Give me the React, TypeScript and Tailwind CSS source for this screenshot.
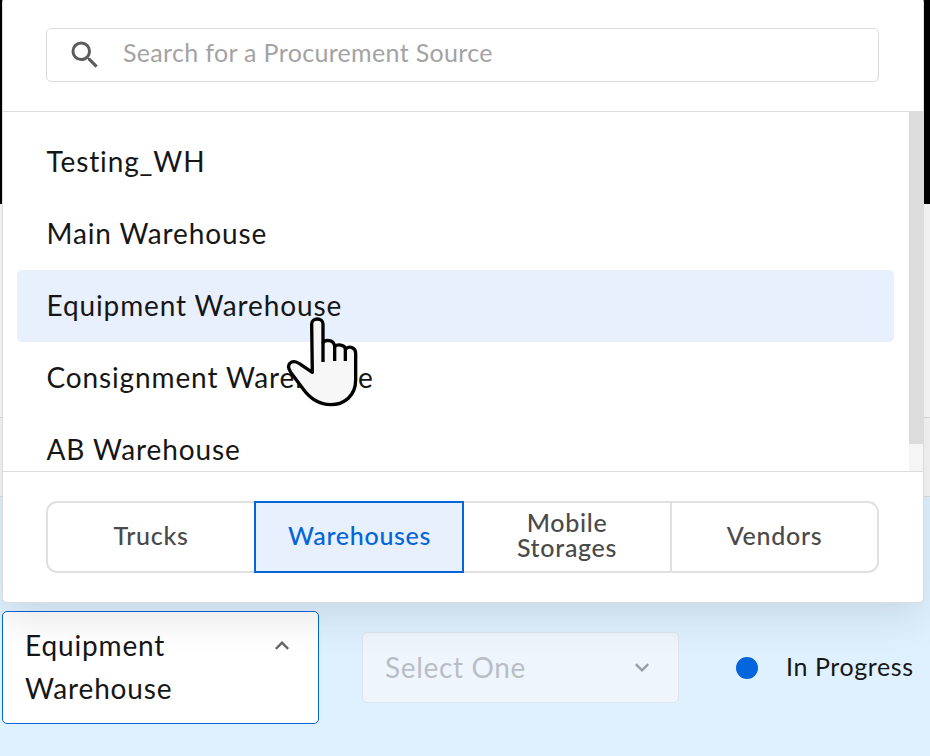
import React, { useState } from 'react'
import clsx from 'clsx'

const sources = [
  'Testing_WH',
  'Main Warehouse',
  'Equipment Warehouse',
  'Consignment Warehouse',
  'AB Warehouse',
]

const tabs = ['Trucks', 'Warehouses', 'Mobile Storages', 'Vendors']

function SearchIcon() {
  return (
    <svg viewBox="0 0 24 24" className="w-9 h-9 shrink-0" fill="#5c5c5c">
      <path d="M15.5 14h-.79l-.28-.27A6.47 6.47 0 0 0 16 9.500 6.500 6.500 0 1 0 9.500 16c1.610 0 3.090-.59 4.230-1.570l.27.28v.79l5 4.990L20.490 19l-4.990-5zm-6 0C7.010 14 5 11.990 5 9.500S7.010 5 9.500 5 14 7.010 14 9.500 11.990 14 9.500 14z" />
    </svg>
  )
}

function Chevron({ up = false, className }: { up?: boolean; className?: string }) {
  return (
    <svg viewBox="0 0 14 9" className={clsx('w-3.5 h-[9px] shrink-0', className)} fill="none" stroke="currentColor" strokeWidth="2.4">
      <path d={up ? 'M0.800 7.900L7 1.700l6.200 6.200' : 'M0.800 1.100L7 7.300l6.200-6.200'} />
    </svg>
  )
}

function HandPointer({ className }: { className?: string }) {
  return (
    <svg viewBox="0 0 360 390" className={className} fill="#f7f7f7" stroke="#000" strokeWidth="10" strokeLinejoin="round">
      <path d="M127 247L125 102C125 82 159 82 159 102V157C166 149 191 148 194 169C203 161 224 164 227 177C240 165 257 174 257 190V270C257 315 225 344 182 344C145 344 120 325 100 298L63 248C45 222 65 207 87 220Z" />
      <path d="M159 155V216M194 167V213M226 175V213" fill="none" />
    </svg>
  )
}

function SourceMenu() {
  const [selected, setSelected] = useState('Equipment Warehouse')
  const [tab, setTab] = useState('Warehouses')

  return (
    <div className="absolute left-[2px] -top-[3px] w-[922px] h-[606px] flex flex-col bg-white border border-[#dcdcdc] rounded-[5px] shadow-[0_16px_40px_rgba(0,0,0,0.1)] overflow-hidden">
      <div className="h-[112px] shrink-0 pl-[43px] pr-[44px] pt-[28px] mt-[2px] border-b border-[#dcdcdc]">
        <div className="h-[54px] flex items-center pl-5 border border-[#dcdcdc] rounded-[5px]">
          <SearchIcon />
          <span className="ml-5 pb-[5px] text-[25px] leading-none tracking-[0.33px] text-[#a3a3a3] whitespace-nowrap">
            Search for a Procurement Source
          </span>
        </div>
      </div>

      <div className="h-[359px] shrink-0 flex">
        <div className="flex-1 overflow-hidden py-[14px] pl-[14px] pr-[15px]">
          {sources.map((name) => (
            <div
              key={name}
              onClick={() => setSelected(name)}
              className={clsx(
                'h-[72px] flex items-center pl-[29.5px] pb-[2px] rounded-[5px] text-[28px] tracking-[0.87px] text-[#161616] whitespace-nowrap',
                name === selected && 'bg-[#e8effd]'
              )}
            >
              {name}
            </div>
          ))}
        </div>
        <div className="w-[14px] bg-[#f5f5f5]">
          <div className="h-[332px] bg-[#dcdcdc]" />
        </div>
      </div>

      <div className="flex-1 border-t border-[#dcdcdc] pl-[43px] pr-[44px] pt-[29px]">
        <div className="h-[72px] grid grid-cols-[210px_208px_208px_207px]">
          {tabs.map((name, i) => (
            <button
              key={name}
              onClick={() => setTab(name)}
              className={clsx(
                'px-8 pb-1 border-2 text-[25px] leading-[25px] tracking-[0.7px] font-medium',
                i > 0 && '-ml-[2px]',
                i === 0 && 'rounded-l-[11px]',
                i === tabs.length - 1 && 'rounded-r-[11px]',
                name === tab
                  ? 'relative bg-[#e8effd] border-[#0265dc] text-[#0265dc]'
                  : 'border-[#e0e0e0] text-[#4a4a4a]'
              )}
            >
              {name}
            </button>
          ))}
        </div>
      </div>
    </div>
  )
}

export default function App() {
  return (
    <div className="relative w-[930px] h-[756px] overflow-hidden flex flex-col font-[Lato,'Liberation_Sans',sans-serif]">
      <div className="h-[204px] bg-black" />
      <div className="h-[214px] bg-[#fbfbfb] border-b border-[#dcdcdc]" />
      <div className="h-[79px] bg-[#f7f7f7] border-b border-[#dcdcdc]" />

      <div className="flex-1 flex items-start bg-[#dff1ff] pt-[114px] pl-[2px]">
        <div className="w-[317px] h-[113px] flex justify-between bg-white border border-[#0265dc] rounded-[5px] pl-[22px] pr-[29.5px] pt-[12px]">
          <div className="w-[180px] text-[28px] leading-[43px] tracking-[0.85px] text-[#161616]">Equipment Warehouse</div>
          <Chevron up className="mt-[17px] text-[#666]" />
        </div>
        <div className="ml-[43px] mt-[21px] w-[317px] h-[71px] flex items-center justify-between bg-[#eff5fc] border border-[#dfe4ea] rounded-[5px] pl-[22px] pr-[29.5px]">
          <span className="pb-[2px] text-[28px] tracking-[0.65px] text-[#b9bec5]">Select One</span>
          <Chevron className="text-[#999fa5]" />
        </div>
        <div className="ml-[57px] mt-[21px] h-[71px] flex items-center">
          <span className="w-[22px] h-[22px] rounded-full bg-[#0265dc]" />
          <span className="ml-[28px] pb-[2px] text-[25px] tracking-[0.6px] text-[#161616] whitespace-nowrap">In Progress</span>
        </div>
      </div>

      <SourceMenu />
      <HandPointer className="absolute left-[270px] top-[290px] w-[120px] h-[130px]" />
    </div>
  )
}
